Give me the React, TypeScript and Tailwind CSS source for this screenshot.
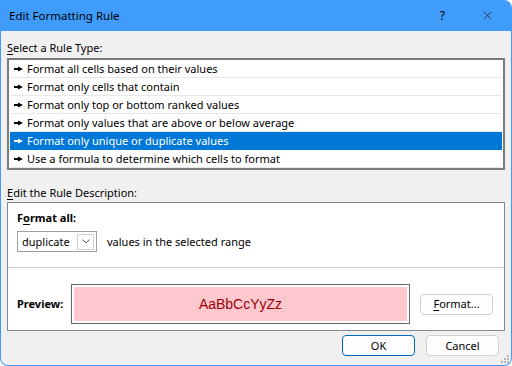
import { X } from "lucide-react";

const rules = [
  "Format all cells based on their values",
  "Format only cells that contain",
  "Format only top or bottom ranked values",
  "Format only values that are above or below average",
  "Format only unique or duplicate values",
  "Use a formula to determine which cells to format",
];

function Bullet({ color }: { color: string }) {
  return (
    <svg width="9" height="6" viewBox="0 0 9 6" className="shrink-0">
      <rect x="0" y="2" width="5" height="2" fill={color} />
      <polygon points="4,0.5 9,3 4,5.5" fill={color} />
    </svg>
  );
}

function Btn({
  children,
  focused,
}: {
  children: React.ReactNode;
  focused?: boolean;
}) {
  return (
    <div
      className={`flex h-[21px] w-[73px] items-center justify-center rounded-[4px] border bg-[#fdfdfd] text-[11px] text-black ${
        focused ? "border-[#0067c0]" : "border-[#d0d0d0]"
      }`}
    >
      {children}
    </div>
  );
}

export default function App() {
  return (
    <div
      className="relative h-[366px] w-[512px] bg-white"
      style={{ fontFamily: '"Noto Sans", "Open Sans", sans-serif' }}
    >
      <div className="flex h-full flex-col overflow-hidden rounded-tr-[8px] rounded-b-[8px] border border-t-0 border-[#3f9cfb] bg-[#f0f0f0]">
        {/* title bar */}
        <div className="flex h-[31px] shrink-0 items-center bg-[#3f9cfb] pl-[8px] text-[11.5px] text-black">
          <span className="flex-1">Edit Formatting Rule</span>
          <span className="mr-[36px] text-[12px]">?</span>
          <X className="mr-[17px] h-[13px] w-[13px]" strokeWidth={1.2} />
        </div>

        <div className="flex flex-1 flex-col px-[6px] text-[11px] leading-[16px] text-black">
          <div className="mt-[9px] h-[16px]">
            <span className="underline underline-offset-2">S</span>elect a Rule Type:
          </div>

          <div className="mt-[2px] border-2 border-[#7a7a7a] bg-white px-[1px]">
            {rules.map((r, i) => {
              const sel = i === 4;
              return (
                <div
                  key={r}
                  className={`flex h-[18px] items-center gap-[4px] pl-[4px] ${
                    sel ? "bg-[#0078d7] text-white" : "border-b border-[#e8e8e8]"
                  }`}
                >
                  <Bullet color={sel ? "#ffffff" : "#000000"} />
                  <span>{r}</span>
                </div>
              );
            })}
          </div>

          <div className="mt-[15px] h-[16px]">
            <span className="underline underline-offset-2">E</span>dit the Rule Description:
          </div>

          <div className="mt-[1px] border border-[#828790] bg-white">
            <div className="h-[65px] border-b border-[#c8c8c8] pl-[9px] pt-[7px]">
              <div className="h-[16px] font-bold">
                F<span className="underline underline-offset-2">o</span>rmat all:
              </div>
              <div className="mt-[5px] flex items-center">
                <div className="flex h-[21px] w-[80px] items-center justify-between border border-[#a0a0a0] pl-[4px] pr-[2px]">
                  <span>duplicate</span>
                  <div className="flex h-[16px] w-[17px] items-center justify-center border border-[#d0d0d0]">
                    <svg width="8" height="5" viewBox="0 0 8 5">
                      <polyline
                        points="0.5,0.5 4,4 7.5,0.5"
                        fill="none"
                        stroke="#606060"
                        strokeWidth="1"
                      />
                    </svg>
                  </div>
                </div>
                <span className="ml-[10px]">values in the selected range</span>
              </div>
            </div>
            <div className="flex items-center pb-[6px] pl-[9px] pt-[16px]">
              <span className="w-[54px] font-bold">Preview:</span>
              <div className="flex h-[40px] w-[339px] items-stretch border border-[#646464] p-[2px]">
                <div
                  className="flex flex-1 items-center justify-center bg-[#ffc7ce] text-[14px] text-[#9c0006]"
                  style={{ fontFamily: '"Liberation Sans", Arial, sans-serif' }}
                >
                  AaBbCcYyZz
                </div>
              </div>
              <div className="ml-[10px]">
                <Btn>
                  <span className="underline underline-offset-2">F</span>ormat...
                </Btn>
              </div>
            </div>
          </div>

          <div className="mt-[4px] flex justify-end gap-[11px] pr-[6px]">
            <Btn focused>OK</Btn>
            <Btn>Cancel</Btn>
          </div>
        </div>
      </div>

      {/* resize grip */}
      <div className="absolute bottom-[3px] right-[3px] grid grid-cols-3 gap-[1px]">
        <span className="h-[2px] w-[2px]" />
        <span className="h-[2px] w-[2px]" />
        <span className="h-[2px] w-[2px] bg-[#b5b5b5]" />
        <span className="h-[2px] w-[2px]" />
        <span className="h-[2px] w-[2px] bg-[#b5b5b5]" />
        <span className="h-[2px] w-[2px] bg-[#b5b5b5]" />
        <span className="h-[2px] w-[2px] bg-[#b5b5b5]" />
        <span className="h-[2px] w-[2px] bg-[#b5b5b5]" />
        <span className="h-[2px] w-[2px] bg-[#b5b5b5]" />
      </div>
    </div>
  );
}
